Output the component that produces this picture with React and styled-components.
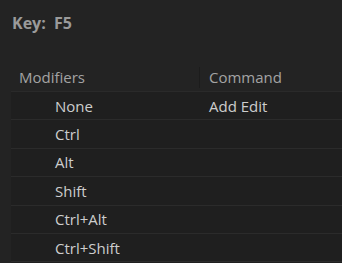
import styled, { createGlobalStyle } from "styled-components";

const Global = createGlobalStyle`
  html, body {
    margin: 0;
    background: #232323;
  }
  body {
    font-family: "Open Sans", "Noto Sans", sans-serif;
  }
`;

const Panel = styled.div`
  width: 342px;
  height: 263px;
  overflow: hidden;
  background: #232323;
  padding: 13px 0 0 11px;
  box-sizing: border-box;
`;

const KeyLabel = styled.div`
  font-size: 16px;
  font-weight: 700;
  color: #9a9a9a;
  padding-left: 1px;
  height: 21px;
  line-height: 21px;
  white-space: pre;
`;

const Table = styled.div`
  margin-top: 30px;
`;

const HeadRow = styled.div`
  display: flex;
  height: 27px;
  align-items: center;
`;

const HeadCell = styled.div`
  width: ${(p) => p.$w}px;
  font-size: 15px;
  color: #a3a3a3;
  padding-left: ${(p) => p.$pad}px;
  box-sizing: border-box;
  border-left: ${(p) => (p.$divider ? "1px solid #1c1c1c" : "none")};
  height: 21px;
  line-height: 21px;
`;

const Body = styled.div`
  background: #1f1f1f;
  border-top: 1px solid #2a2a2a;
`;

const Row = styled.div`
  display: flex;
  align-items: center;
  height: 27.4px;
  border-bottom: 1px solid #2b2b2b;
`;

const Cell = styled.div`
  width: ${(p) => p.$w}px;
  padding-left: ${(p) => p.$pad}px;
  box-sizing: border-box;
  font-size: 15px;
  color: #cdcdcd;
`;

const rows = [
  ["None", "Add Edit"],
  ["Ctrl", ""],
  ["Alt", ""],
  ["Shift", ""],
  ["Ctrl+Alt", ""],
  ["Ctrl+Shift", ""],
  ["", ""],
];

export default function App() {
  return (
    <Panel>
      <Global />
      <KeyLabel>{"Key:  F5"}</KeyLabel>
      <Table>
        <HeadRow>
          <HeadCell $w={188} $pad={8}>Modifiers</HeadCell>
          <HeadCell $w={143} $pad={9} $divider>Command</HeadCell>
        </HeadRow>
        <Body>
          {rows.map(([mod, cmd], i) => (
            <Row key={i}>
              <Cell $w={188} $pad={44}>{mod}</Cell>
              <Cell $w={143} $pad={10}>{cmd}</Cell>
            </Row>
          ))}
        </Body>
      </Table>
    </Panel>
  );
}
